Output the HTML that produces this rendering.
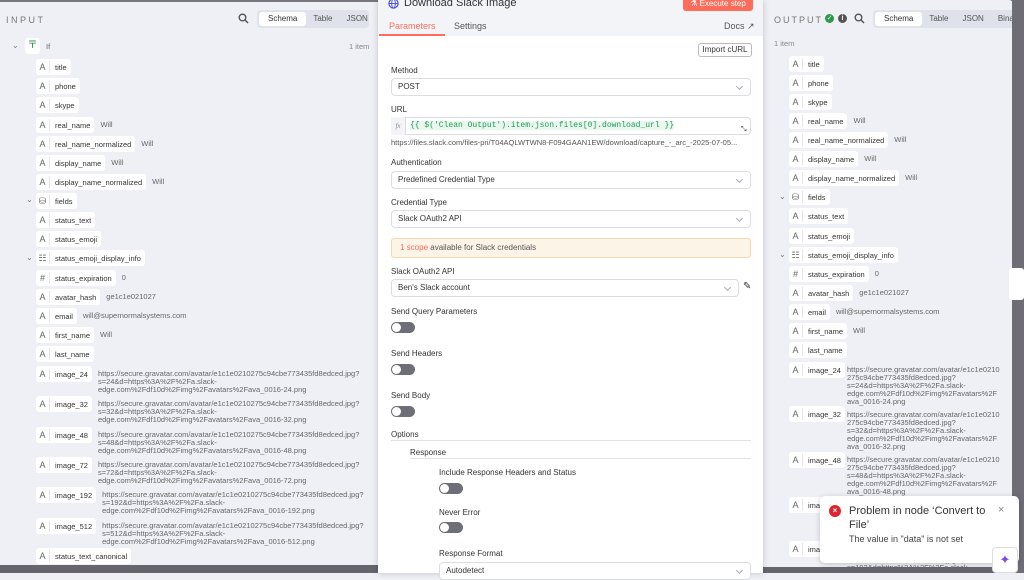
<!DOCTYPE html>
<html><head><meta charset="utf-8"><style>
*{margin:0;padding:0;box-sizing:border-box}
body{width:1024px;height:573px;overflow:hidden;position:relative;background:#eef0f5;font-family:"Liberation Sans",sans-serif;color:#555}
.a{position:absolute}
.r{position:absolute;display:flex;align-items:flex-start;white-space:nowrap}
.p{height:16px;background:#fff;border-radius:3px;font-size:7.5px;color:#333;display:flex;align-items:center;white-space:nowrap;flex:none}
.p i{font-style:normal;width:14px;text-align:center;border-right:1px solid #e6e6ea;height:12px;line-height:12px;color:#666;font-size:9px}
.p b{font-weight:normal;padding:0 4px 0 5px}
.v{font-size:7.5px;color:#666;white-space:nowrap;line-height:8px;margin-left:6px;padding-top:4px}
.ch{position:absolute;font-size:8px;color:#777}
.seg{position:absolute;top:10px;height:18px;background:#dfe2ea;border-radius:4px;font-size:8px;display:flex;align-items:center;padding:2px;color:#555}
.seg span{padding:0 7px;height:14px;line-height:14px}
.seg span.on{background:#fff;border-radius:3px;color:#333;padding:0 9px}
.lbl{position:absolute;font-size:8px;color:#333}
.sel{position:absolute;height:18px;border:1px solid #dcdde3;border-radius:4px;background:#fff;font-size:8px;color:#333;padding-left:6px;line-height:16px}
.sel:after{content:"";position:absolute;right:8px;top:5px;width:4px;height:4px;border-right:1px solid #aaa;border-bottom:1px solid #aaa;transform:rotate(45deg)}
.tg{position:absolute;width:24px;height:11px;border-radius:6px;background:#6e6e78}
.tg:before{content:"";position:absolute;left:1px;top:1px;width:9px;height:9px;border-radius:50%;background:#fff}
</style></head><body>
<div class="a" style="left:0;top:0;width:1024px;height:2px;background:#77767e"></div>
<!-- LEFT -->
<div class="a" style="left:6px;top:15px;font-size:9px;letter-spacing:2.5px;color:#777">INPUT</div>
<svg class="a" style="left:238px;top:13px" width="11" height="11" viewBox="0 0 11 11"><circle cx="4.5" cy="4.5" r="3.3" fill="none" stroke="#555" stroke-width="1.4"/><path d="M7 7l3 3" stroke="#555" stroke-width="1.5"/></svg>
<div class="seg" style="left:257px;width:112px"><span class="on">Schema</span><span>Table</span><span>JSON</span></div>
<div class="ch" style="left:12px;top:41px">⌄</div>
<div class="a" style="left:25px;top:38px;width:15px;height:16px;background:#fff;border-radius:3px;text-align:center;color:#2a8a3e;font-size:10px;line-height:16px">〒</div>
<div class="a" style="left:46px;top:42px;font-size:7.5px;color:#666">If</div>
<div class="a" style="left:349px;top:42px;font-size:7.5px;color:#888">1 item</div>

<div class="r" style="left:36px;top:59px"><div class="p"><i>A</i><b>title</b></div></div>
<div class="r" style="left:36px;top:78px"><div class="p"><i>A</i><b>phone</b></div></div>
<div class="r" style="left:36px;top:97px"><div class="p"><i>A</i><b>skype</b></div></div>
<div class="r" style="left:36px;top:117px"><div class="p"><i>A</i><b>real_name</b></div><div class="v">Will</div></div>
<div class="r" style="left:36px;top:136px"><div class="p"><i>A</i><b>real_name_normalized</b></div><div class="v">Will</div></div>
<div class="r" style="left:36px;top:155px"><div class="p"><i>A</i><b>display_name</b></div><div class="v">Will</div></div>
<div class="r" style="left:36px;top:174px"><div class="p"><i>A</i><b>display_name_normalized</b></div><div class="v">Will</div></div>
<div class="ch" style="left:26px;top:195px">⌄</div>
<div class="r" style="left:36px;top:193px"><div class="p"><i>⛁</i><b>fields</b></div></div>
<div class="r" style="left:36px;top:212px"><div class="p"><i>A</i><b>status_text</b></div></div>
<div class="r" style="left:36px;top:231px"><div class="p"><i>A</i><b>status_emoji</b></div></div>
<div class="ch" style="left:26px;top:253px">⌄</div>
<div class="r" style="left:36px;top:250px"><div class="p"><i>☷</i><b>status_emoji_display_info</b></div></div>
<div class="r" style="left:36px;top:270px"><div class="p"><i>#</i><b>status_expiration</b></div><div class="v">0</div></div>
<div class="r" style="left:36px;top:289px"><div class="p"><i>A</i><b>avatar_hash</b></div><div class="v">ge1c1e021027</div></div>
<div class="r" style="left:36px;top:308px"><div class="p"><i>A</i><b>email</b></div><div class="v">will@supernormalsystems.com</div></div>
<div class="r" style="left:36px;top:327px"><div class="p"><i>A</i><b>first_name</b></div><div class="v">Will</div></div>
<div class="r" style="left:36px;top:346px"><div class="p"><i>A</i><b>last_name</b></div></div>
<div class="r" style="left:36px;top:366px"><div class="p"><i>A</i><b>image_24</b></div><div class="v">https://secure.gravatar.com/avatar/e1c1e0210275c94cbe773435fd8edced.jpg?<br>s=24&amp;d=https%3A%2F%2Fa.slack-<br>edge.com%2Fdf10d%2Fimg%2Favatars%2Fava_0016-24.png</div></div>
<div class="r" style="left:36px;top:396px"><div class="p"><i>A</i><b>image_32</b></div><div class="v">https://secure.gravatar.com/avatar/e1c1e0210275c94cbe773435fd8edced.jpg?<br>s=32&amp;d=https%3A%2F%2Fa.slack-<br>edge.com%2Fdf10d%2Fimg%2Favatars%2Fava_0016-32.png</div></div>
<div class="r" style="left:36px;top:427px"><div class="p"><i>A</i><b>image_48</b></div><div class="v">https://secure.gravatar.com/avatar/e1c1e0210275c94cbe773435fd8edced.jpg?<br>s=48&amp;d=https%3A%2F%2Fa.slack-<br>edge.com%2Fdf10d%2Fimg%2Favatars%2Fava_0016-48.png</div></div>
<div class="r" style="left:36px;top:457px"><div class="p"><i>A</i><b>image_72</b></div><div class="v">https://secure.gravatar.com/avatar/e1c1e0210275c94cbe773435fd8edced.jpg?<br>s=72&amp;d=https%3A%2F%2Fa.slack-<br>edge.com%2Fdf10d%2Fimg%2Favatars%2Fava_0016-72.png</div></div>
<div class="r" style="left:36px;top:487px"><div class="p"><i>A</i><b>image_192</b></div><div class="v">https://secure.gravatar.com/avatar/e1c1e0210275c94cbe773435fd8edced.jpg?<br>s=192&amp;d=https%3A%2F%2Fa.slack-<br>edge.com%2Fdf10d%2Fimg%2Favatars%2Fava_0016-192.png</div></div>
<div class="r" style="left:36px;top:518px"><div class="p"><i>A</i><b>image_512</b></div><div class="v">https://secure.gravatar.com/avatar/e1c1e0210275c94cbe773435fd8edced.jpg?<br>s=512&amp;d=https%3A%2F%2Fa.slack-<br>edge.com%2Fdf10d%2Fimg%2Favatars%2Fava_0016-512.png</div></div>
<div class="r" style="left:36px;top:548px"><div class="p"><i>A</i><b>status_text_canonical</b></div></div>
<div class="a" style="left:0;top:565px;width:378px;height:8px;background:#66656d"></div>

<!-- RIGHT -->
<div class="a" style="left:763px;top:0;width:250px;height:573px;background:#eef0f5;border-radius:0 4px 0 0"></div>
<div class="a" style="left:1012px;top:0;width:12px;height:573px;background:#6e6d75"></div>
<div class="a" style="left:1009px;top:268px;width:15px;height:32px;background:#fff;border-radius:3px"></div>
<div class="a" style="left:774px;top:15px;font-size:9px;letter-spacing:2px;color:#777">OUTPUT</div>
<div class="a" style="left:825px;top:14px;width:9px;height:9px;border-radius:50%;background:#2a9a4a;color:#fff;font-size:7px;line-height:9px;text-align:center">✓</div>
<div class="a" style="left:838px;top:14px;width:9px;height:9px;border-radius:50%;background:#555;color:#fff;font-size:7px;line-height:9px;text-align:center;font-weight:bold">i</div>
<svg class="a" style="left:854px;top:13px" width="11" height="11" viewBox="0 0 11 11"><circle cx="4.5" cy="4.5" r="3.3" fill="none" stroke="#555" stroke-width="1.4"/><path d="M7 7l3 3" stroke="#555" stroke-width="1.5"/></svg>
<div class="seg" style="left:873px;width:145px;border-radius:4px 0 0 4px"><span class="on">Schema</span><span>Table</span><span>JSON</span><span>Binary</span></div>
<div class="a" style="left:1012px;top:0;width:12px;height:40px;background:#6e6d75"></div>
<div class="a" style="left:774px;top:39px;font-size:7.5px;color:#888">1 item</div>
<div class="r" style="left:789px;top:56px"><div class="p"><i>A</i><b>title</b></div></div>
<div class="r" style="left:789px;top:75px"><div class="p"><i>A</i><b>phone</b></div></div>
<div class="r" style="left:789px;top:94px"><div class="p"><i>A</i><b>skype</b></div></div>
<div class="r" style="left:789px;top:113px"><div class="p"><i>A</i><b>real_name</b></div><div class="v">Will</div></div>
<div class="r" style="left:789px;top:132px"><div class="p"><i>A</i><b>real_name_normalized</b></div><div class="v">Will</div></div>
<div class="r" style="left:789px;top:151px"><div class="p"><i>A</i><b>display_name</b></div><div class="v">Will</div></div>
<div class="r" style="left:789px;top:170px"><div class="p"><i>A</i><b>display_name_normalized</b></div><div class="v">Will</div></div>
<div class="ch" style="left:779px;top:192px">⌄</div>
<div class="r" style="left:789px;top:189px"><div class="p"><i>⛁</i><b>fields</b></div></div>
<div class="r" style="left:789px;top:208px"><div class="p"><i>A</i><b>status_text</b></div></div>
<div class="r" style="left:789px;top:228px"><div class="p"><i>A</i><b>status_emoji</b></div></div>
<div class="ch" style="left:779px;top:250px">⌄</div>
<div class="r" style="left:789px;top:247px"><div class="p"><i>☷</i><b>status_emoji_display_info</b></div></div>
<div class="r" style="left:789px;top:266px"><div class="p"><i>#</i><b>status_expiration</b></div><div class="v">0</div></div>
<div class="r" style="left:789px;top:285px"><div class="p"><i>A</i><b>avatar_hash</b></div><div class="v">ge1c1e021027</div></div>
<div class="r" style="left:789px;top:304px"><div class="p"><i>A</i><b>email</b></div><div class="v">will@supernormalsystems.com</div></div>
<div class="r" style="left:789px;top:323px"><div class="p"><i>A</i><b>first_name</b></div><div class="v">Will</div></div>
<div class="r" style="left:789px;top:342px"><div class="p"><i>A</i><b>last_name</b></div></div>
<div class="r" style="left:789px;top:362px"><div class="p"><i>A</i><b>image_24</b></div></div>
<div class="a v" style="left:847px;top:362px;margin:0">https://secure.gravatar.com/avatar/e1c1e0210<br>275c94cbe773435fd8edced.jpg?<br>s=24&amp;d=https%3A%2F%2Fa.slack-<br>edge.com%2Fdf10d%2Fimg%2Favatars%2F<br>ava_0016-24.png</div>
<div class="r" style="left:789px;top:406px"><div class="p"><i>A</i><b>image_32</b></div></div>
<div class="a v" style="left:847px;top:407px;margin:0">https://secure.gravatar.com/avatar/e1c1e0210<br>275c94cbe773435fd8edced.jpg?<br>s=32&amp;d=https%3A%2F%2Fa.slack-<br>edge.com%2Fdf10d%2Fimg%2Favatars%2F<br>ava_0016-32.png</div>
<div class="r" style="left:789px;top:452px"><div class="p"><i>A</i><b>image_48</b></div></div>
<div class="a v" style="left:847px;top:452px;margin:0">https://secure.gravatar.com/avatar/e1c1e0210<br>275c94cbe773435fd8edced.jpg?<br>s=48&amp;d=https%3A%2F%2Fa.slack-<br>edge.com%2Fdf10d%2Fimg%2Favatars%2F<br>ava_0016-48.png</div>
<div class="r" style="left:789px;top:497px"><div class="p"><i>A</i><b>image_72</b></div></div>
<div class="r" style="left:789px;top:541px"><div class="p"><i>A</i><b>image_192</b></div></div>
<div class="a v" style="left:847px;top:552px;margin:0">0275c94cbe773435fd8edced.jpg?<br>s=192&amp;d=https%3A%2F%2Fa.slack-</div>
<div class="a" style="left:763px;top:567px;width:250px;height:6px;background:#66656d"></div>

<!-- MIDDLE -->
<div class="a" style="left:378px;top:0;width:385px;height:573px;background:#fff;box-shadow:0 0 6px rgba(0,0,0,.2)"></div>
<div class="a" style="left:378px;top:0;width:385px;height:36px;background:#f3f4f8"></div>
<svg class="a" style="left:388px;top:-2px" width="11" height="11" viewBox="0 0 12 12"><circle cx="6" cy="6" r="5" fill="none" stroke="#4a4ae0" stroke-width="1.3"/><ellipse cx="6" cy="6" rx="2" ry="5" fill="none" stroke="#4a4ae0" stroke-width="1"/><path d="M1 6h10" stroke="#4a4ae0"/></svg>
<div class="a" style="left:404px;top:-3px;font-size:11px;color:#333">Download Slack Image</div>
<div class="a" style="left:683px;top:-4px;width:70px;height:15px;background:#ff6d5a;border-radius:3px;color:#fff;font-size:8px;text-align:center;line-height:15px">⚗ Execute step</div>
<div class="a" style="left:389px;top:21px;font-size:9px;color:#ff6d5a">Parameters</div>
<div class="a" style="left:379px;top:34px;width:66px;height:2px;background:#ff6d5a"></div>
<div class="a" style="left:454px;top:21px;font-size:9px;color:#555">Settings</div>
<div class="a" style="left:724px;top:21px;font-size:9px;color:#555">Docs ↗</div>
<div class="a" style="left:698px;top:43px;width:54px;height:14px;border:1px solid #bbb;border-radius:3px;font-size:8px;color:#333;text-align:center;line-height:12px">Import cURL</div>
<div class="lbl" style="left:391px;top:66px">Method</div>
<div class="sel" style="left:391px;top:78px;width:360px">POST</div>
<div class="lbl" style="left:391px;top:105px">URL</div>
<div class="a" style="left:391px;top:117px;width:360px;height:18px;border:1px solid #dcdde3;border-radius:4px;background:#fff"></div>
<div class="a" style="left:391px;top:117px;width:15px;height:18px;background:#f3f4f8;border-right:1px solid #dcdde3;font-size:7px;font-style:italic;color:#888;text-align:center;line-height:18px;font-family:'Liberation Serif',serif">fx</div>
<div class="a" style="left:410px;top:121px;font-family:'Liberation Mono',monospace;font-size:8px;color:#1f9d55;background:#eaf7ee">{{ $('Clean Output').item.json.files[0].download_url }}</div>
<div class="a" style="left:741px;top:126px;font-size:7px;color:#333">⤡</div>
<div class="lbl" style="left:391px;top:138px;color:#555;font-size:7.5px">https://files.slack.com/files-pri/T04AQLWTWN8-F094GAAN1EW/download/capture_-_arc_-2025-07-05...</div>
<div class="lbl" style="left:391px;top:158px">Authentication</div>
<div class="sel" style="left:391px;top:171px;width:360px">Predefined Credential Type</div>
<div class="lbl" style="left:391px;top:198px">Credential Type</div>
<div class="sel" style="left:391px;top:210px;width:360px">Slack OAuth2 API</div>
<div class="a" style="left:391px;top:238px;width:360px;height:20px;background:#fdf4e8;border:1px solid #f3d9b1;border-radius:3px;font-size:8px;color:#555;padding-left:8px;line-height:18px"><span style="color:#ff6d5a">1 scope</span> available for Slack credentials</div>
<div class="lbl" style="left:391px;top:267px">Slack OAuth2 API</div>
<div class="sel" style="left:391px;top:279px;width:348px">Ben's Slack account</div>
<div class="a" style="left:743px;top:281px;font-size:10px;color:#333">✎</div>
<div class="lbl" style="left:391px;top:307px">Send Query Parameters</div>
<div class="tg" style="left:391px;top:322px"></div>
<div class="lbl" style="left:391px;top:349px">Send Headers</div>
<div class="tg" style="left:391px;top:364px"></div>
<div class="lbl" style="left:391px;top:391px">Send Body</div>
<div class="tg" style="left:391px;top:406px"></div>
<div class="lbl" style="left:391px;top:430px">Options</div>
<div class="a" style="left:391px;top:440px;width:360px;height:1px;background:#e2e3e8"></div>
<div class="lbl" style="left:410px;top:448px">Response</div>
<div class="a" style="left:410px;top:458px;width:341px;height:1px;background:#e2e3e8"></div>
<div class="lbl" style="left:439px;top:468px">Include Response Headers and Status</div>
<div class="tg" style="left:439px;top:483px"></div>
<div class="lbl" style="left:439px;top:508px">Never Error</div>
<div class="tg" style="left:439px;top:522px"></div>
<div class="lbl" style="left:439px;top:549px">Response Format</div>
<div class="sel" style="left:439px;top:562px;width:312px">Autodetect</div>

<!-- TOAST -->
<div class="a" style="left:820px;top:496px;width:199px;height:67px;background:#fff;border-radius:5px;box-shadow:0 1px 6px rgba(0,0,0,.2)"></div>
<div class="a" style="left:829px;top:505px;width:12px;height:12px;border-radius:50%;background:#e0242f;color:#fff;font-size:8px;line-height:12px;text-align:center;font-weight:bold">×</div>
<div class="a" style="left:849px;top:504px;font-size:11px;color:#333;line-height:14px;width:140px">Problem in node ‘Convert to File’</div>
<div class="a" style="left:849px;top:534px;font-size:9px;color:#444">The value in "data" is not set</div>
<div class="a" style="left:998px;top:504px;font-size:11px;color:#888">×</div>
<div class="a" style="left:992px;top:547px;width:26px;height:26px;background:#fff;border:1px solid #ddd;border-radius:4px;color:#7b4ae8;font-size:13px;text-align:center;line-height:24px">✦</div>
</body></html>
